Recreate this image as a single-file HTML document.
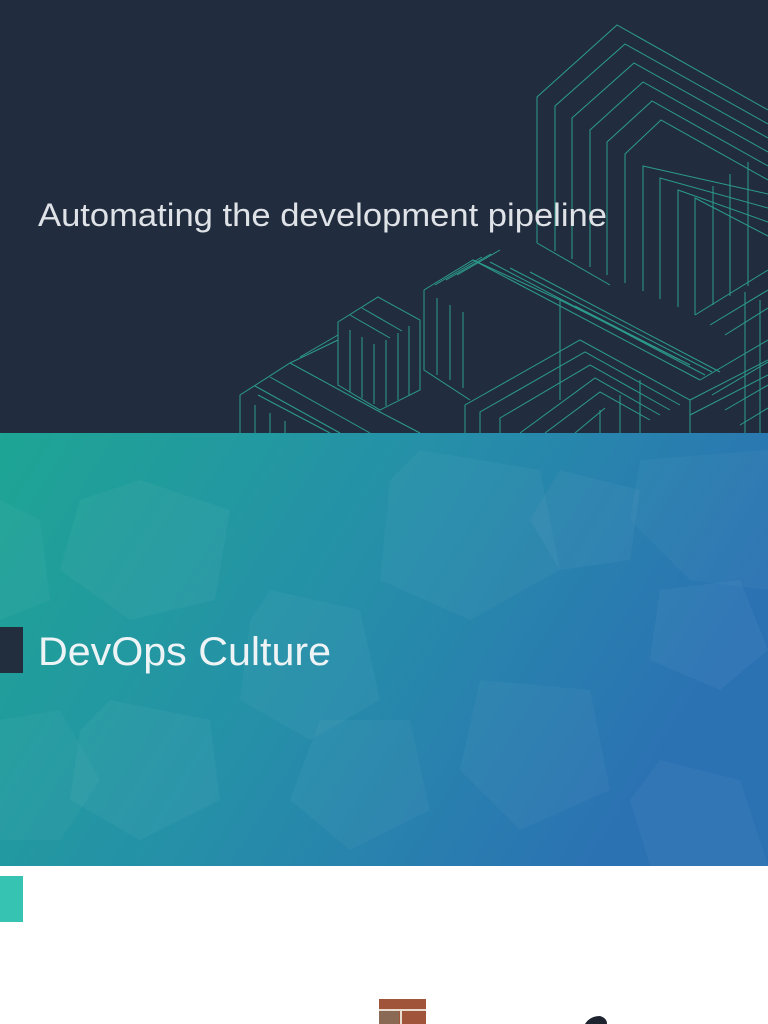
<!DOCTYPE html>
<html><head><meta charset="utf-8"><style>
html,body{margin:0;padding:0;width:768px;height:1024px;overflow:hidden;background:#fff}
svg{display:block}
</style></head><body>
<svg width="768" height="1024" viewBox="0 0 768 1024" xmlns="http://www.w3.org/2000/svg">
<defs>
<linearGradient id="g" x1="0" y1="0" x2="1" y2="0.35">
<stop offset="0" stop-color="#1ea594"/>
<stop offset="0.5" stop-color="#2590a8"/>
<stop offset="1" stop-color="#2b72b3"/>
</linearGradient>
</defs>
<rect x="0" y="0" width="768" height="433" fill="#212d3e"/>
<g fill="none" stroke="#2fb7a0" stroke-width="1" opacity="0.8">
<path d="M537,243 V97 L617,25 L768,110"/>
<path d="M555,251 V106 L625,44 L768,124"/>
<path d="M572,259 V118 L634,63 L768,138"/>
<path d="M590,267 V130 L643,82 L768,152"/>
<path d="M607,275 V142 L652,101 L768,166"/>
<path d="M625,283 V154 L661,120 L768,180"/>
<path d="M643,291 V166 L768,194"/>
<path d="M660,299 V178 L768,208"/>
<path d="M678,307 V190 L768,222"/>
<path d="M695,315 V198 L768,236"/>
<path d="M713,305 V186"/>
<path d="M730,296 V174"/>
<path d="M748,286 V162"/>
<path d="M537,243 L610,285"/>
<path d="M695,315 L768,270"/><path d="M710,325 L768,290"/><path d="M725,335 L768,308"/>
<path d="M745,292 V433"/><path d="M760,300 V433"/>
<path d="M700,380 L768,340"/><path d="M712,395 L768,362"/><path d="M725,410 L768,385"/><path d="M740,425 L768,408"/>
<path d="M424,290 L473,260 L560,300 V400"/>
<path d="M424,290 V370 L470,400"/>
<path d="M435,285 L482,257"/><path d="M446,280 L491,254"/><path d="M457,275 L500,250"/>
<path d="M437,298 V375"/><path d="M450,305 V380"/><path d="M463,312 V388"/>
<path d="M473,260 L700,380"/><path d="M490,262 L705,375"/><path d="M510,268 L712,372"/><path d="M530,272 L720,372"/>
<path d="M560,300 L680,360"/><path d="M575,306 L690,365"/>
<path d="M338,322 L378,297 L420,320 V390 L380,410 L338,385 Z"/>
<path d="M350,330 V392"/><path d="M362,337 V398"/><path d="M374,344 V404"/><path d="M386,340 V406"/><path d="M398,333 V400"/><path d="M409,326 V395"/>
<path d="M350,315 L390,338"/><path d="M362,308 L402,331"/>
<path d="M240,395 L290,363 L380,412 L420,433"/>
<path d="M240,395 V433"/><path d="M255,405 V433"/><path d="M270,413 V433"/><path d="M285,421 V433"/>
<path d="M255,386 L340,433"/><path d="M270,377 L370,433"/><path d="M290,363 L338,340"/><path d="M300,357 L338,335"/>
<path d="M258,395 L330,433"/>
<path d="M465,433 V405 L580,340 L690,400 V433"/>
<path d="M480,433 V412 L585,352 L680,405"/>
<path d="M500,433 V418 L590,365 L670,410"/>
<path d="M520,433 L595,378 L660,415"/>
<path d="M545,433 L600,392 L650,420"/>
<path d="M575,433 L605,408"/>
<path d="M600,433 V410"/><path d="M620,433 V395"/><path d="M640,433 V380"/>
<path d="M690,400 L768,360"/><path d="M690,415 L768,375"/>
</g>
<text x="38" y="226" fill="#dfe3e8" font-family="Liberation Sans, sans-serif" font-size="32" textLength="569" lengthAdjust="spacingAndGlyphs">Automating the development pipeline</text>

<rect x="0" y="433" width="768" height="433" fill="url(#g)"/>
<g fill="#ffffff">
<path d="M140,480 L230,510 L215,600 L130,620 L60,570 L80,500 Z" opacity="0.04"/>
<path d="M420,450 L540,470 L560,570 L470,620 L380,580 L390,480 Z" opacity="0.035"/>
<path d="M560,470 L640,490 L630,560 L560,570 L530,520 Z" opacity="0.04"/>
<path d="M640,460 L768,450 L768,590 L690,580 L630,520 Z" opacity="0.03"/>
<path d="M660,590 L740,580 L768,650 L720,690 L650,660 Z" opacity="0.04"/>
<path d="M270,590 L360,610 L380,700 L310,740 L240,700 L250,620 Z" opacity="0.035"/>
<path d="M110,700 L210,720 L220,800 L140,840 L70,800 L80,730 Z" opacity="0.04"/>
<path d="M0,720 L60,710 L100,780 L60,840 L0,840 Z" opacity="0.03"/>
<path d="M320,720 L410,720 L430,810 L350,850 L290,800 Z" opacity="0.035"/>
<path d="M480,680 L590,690 L610,790 L520,830 L460,770 Z" opacity="0.035"/>
<path d="M660,760 L740,780 L768,866 L650,866 L630,800 Z" opacity="0.035"/>
<path d="M0,500 L40,520 L50,600 L0,620 Z" opacity="0.035"/>
</g>
<rect x="0" y="627" width="23" height="46" fill="#222d3d"/>
<text x="38" y="665" fill="#eef4f6" font-family="Liberation Sans, sans-serif" font-size="40" textLength="293" lengthAdjust="spacingAndGlyphs">DevOps Culture</text>

<rect x="0" y="876" width="23" height="46" fill="#36c3b1"/>
<rect x="379" y="999" width="47" height="25" fill="#a0553a"/>
<rect x="379" y="1009" width="47" height="2" fill="#e8ddd0"/>
<rect x="400" y="1011" width="2" height="13" fill="#e8ddd0"/>
<rect x="379" y="1011" width="20" height="13" fill="#8a6a55"/>
<path d="M585,1024 Q590,1016 600,1016 Q607,1018 607,1024 Z" fill="#1e2330"/>
</svg>
</body></html>
